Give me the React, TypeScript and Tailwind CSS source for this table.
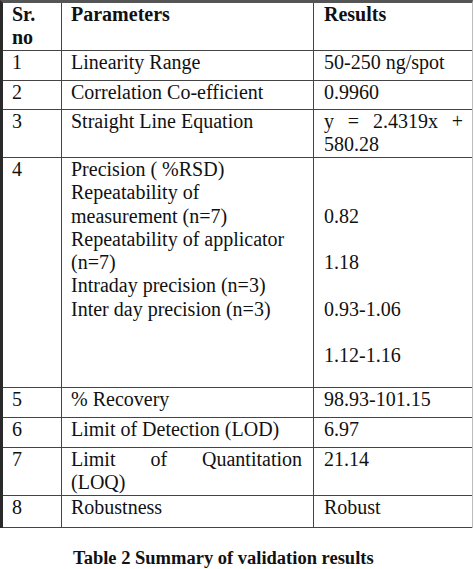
import React from "react";

const C1 = "w-[59px] shrink-0 border-r border-[#444] pl-[9px]";
const C2 = "w-[252px] shrink-0 border-r border-[#444] pl-[9px] pr-[11px]";
const C3 = "flex-1 pl-[10px] pr-[9px]";

function Row({ h, a, b, c }: { h: string; a: React.ReactNode; b: React.ReactNode; c: React.ReactNode }) {
  return (
    <div className={`flex border-b border-[#444] ${h}`}>
      <div className={C1}>{a}</div>
      <div className={C2}>{b}</div>
      <div className={C3}>{c}</div>
    </div>
  );
}

export default function App() {
  return (
    <div className="w-[474px] h-[569px] bg-white text-[#111] font-['Liberation_Serif','Times_New_Roman',serif] text-[20px] leading-[23.3px] overflow-hidden">
      <div className="w-[473px] border-t-[3px] border-l-[3px] border-r border-t-[#555] border-l-[#2a2a2a] border-r-[#bdbdbd]">
        <Row
          h="h-[48px]"
          a={<span className="font-bold">Sr.<br />no</span>}
          b={<span className="font-bold">Parameters</span>}
          c={<span className="font-bold">Results</span>}
        />
        <Row h="h-[30px]" a="1" b="Linearity Range" c="50-250 ng/spot" />
        <Row h="h-[29px]" a="2" b="Correlation Co-efficient" c="0.9960" />
        <Row
          h="h-[48px]"
          a="3"
          b="Straight Line Equation"
          c={
            <>
              <div className="text-justify [text-align-last:justify]">y = 2.4319x +</div>
              <div>580.28</div>
            </>
          }
        />
        <Row
          h="h-[230px]"
          a="4"
          b={
            <>
              <div>Precision ( %RSD)</div>
              <div>Repeatability of</div>
              <div>measurement (n=7)</div>
              <div>Repeatability of applicator</div>
              <div>(n=7)</div>
              <div>Intraday precision (n=3)</div>
              <div>Inter day precision (n=3)</div>
            </>
          }
          c={
            <>
              <div>&nbsp;</div>
              <div>&nbsp;</div>
              <div>0.82</div>
              <div>&nbsp;</div>
              <div>1.18</div>
              <div>&nbsp;</div>
              <div>0.93-1.06</div>
              <div>&nbsp;</div>
              <div>1.12-1.16</div>
            </>
          }
        />
        <Row h="h-[30px]" a="5" b="% Recovery" c="98.93-101.15" />
        <Row h="h-[30px]" a="6" b="Limit of Detection (LOD)" c="6.97" />
        <Row
          h="h-[48px]"
          a="7"
          b={
            <>
              <div className="text-justify [text-align-last:justify]">Limit of Quantitation</div>
              <div>(LOQ)</div>
            </>
          }
          c="21.14"
        />
        <Row h="h-[32px]" a="8" b="Robustness" c="Robust" />
      </div>
      <div className="mt-[20px] pl-[73px] font-bold text-[18.5px] leading-[21px]">
        Table 2 Summary of validation results
      </div>
    </div>
  );
}
